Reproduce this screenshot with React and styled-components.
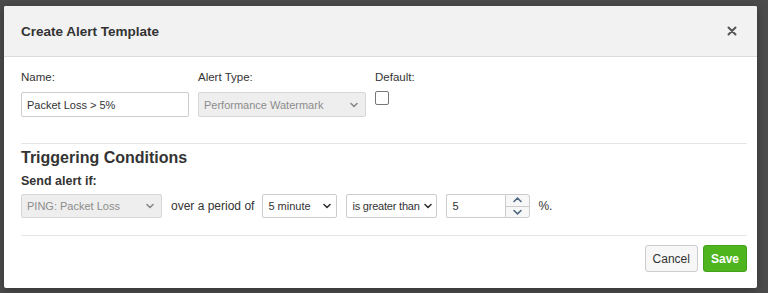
import React from 'react';
import styled, { createGlobalStyle } from 'styled-components';

const Global = createGlobalStyle`
  html, body { margin: 0; padding: 0; }
  body {
    background: #4b4b4b;
    font-family: "Liberation Sans", Arial, sans-serif;
    color: #333;
  }
`

const Backdrop = styled.div`
  padding: 6px 11px 5px 4px;
  height: 293px;
  box-sizing: border-box;
`
const Modal = styled.div`
  background: #fff;
  border-radius: 2px;
  height: 282px;
  display: flex;
  flex-direction: column;
  box-shadow: 0 2px 8px rgba(0,0,0,0.3);
`
const Header = styled.div`
  height: 50px;
  background: #f2f2f2;
  border-bottom: 1px solid #dcdcdc;
  border-radius: 2px 2px 0 0;
  display: flex;
  align-items: center;
  justify-content: space-between;
  padding: 0 20px 0 17px;
`
const Title = styled.h4`
  margin: 0;
  font-size: 13.5px;
  font-weight: bold;
  color: #333;
`
const Close = styled.button`
  border: none;
  background: none;
  padding: 0;
  color: #555;
  display: flex;
  cursor: pointer;
`
const Body = styled.div`
  padding: 13px 10px 0 17px;
`
const Fields = styled.div`
  display: flex;
  gap: 9px;
`
const Field = styled.div`
  display: flex;
  flex-direction: column;
  width: ${p => p.width || 'auto'};
`
const Label = styled.label`
  font-size: 11.5px;
  line-height: 14px;
  margin-bottom: 8px;
  color: #333;
`
const TextInput = styled.input`
  box-sizing: border-box;
  width: 100%;
  height: 25px;
  border: 1px solid #ccc;
  border-radius: 2px;
  padding: 0 5px;
  font: 11px "Liberation Sans", Arial, sans-serif;
  color: #333;
  outline: none;
`
const SelectWrap = styled.div`
  position: relative;
  width: ${p => p.width};
  height: ${p => p.height || '24px'};
  margin-left: ${p => p.offset || '0'};
`
const Select = styled.select`
  appearance: none;
  box-sizing: border-box;
  width: 100%;
  height: 100%;
  border: 1px solid ${p => (p.disabled ? '#d6d6d6' : '#ccc')};
  border-radius: 2px;
  background: ${p => (p.disabled ? '#eeeeee' : '#fff')};
  color: ${p => (p.disabled ? '#8c8c8c' : '#333')};
  font: 11px "Liberation Sans", Arial, sans-serif;
  letter-spacing: ${p => p.tight ? '-0.2px' : '0'};
  padding: 0 14px 0 5px;
  opacity: 1;
`
const Chevron = styled.svg`
  position: absolute;
  right: ${p => p.right || '7px'};
  top: 50%;
  transform: translateY(-50%);
  pointer-events: none;
`
const Check = styled.span`
  display: block;
  width: 12px;
  height: 12px;
  border: 1px solid #767676;
  border-radius: 2px;
  background: #fff;
  margin-top: -1px;
`
const Hr = styled.div`
  height: 1px;
  background: #e5e5e5;
  margin: ${p => p.margin};
`
const SectionTitle = styled.h3`
  margin: 0;
  font-size: 16px;
  font-weight: bold;
  line-height: 18px;
  color: #333;
`
const SubTitle = styled.div`
  font-size: 12.5px;
  font-weight: bold;
  line-height: 14px;
  margin: 7px 0 6px;
`
const CondRow = styled.div`
  display: flex;
  align-items: center;
  height: 24px;
`
const Text = styled.span`
  font-size: 12px;
  color: #333;
  margin: ${p => p.margin};
`
const NumberBox = styled.div`
  display: flex;
  height: 24px;
  margin-left: 9px;
`
const NumberInput = styled.input`
  box-sizing: border-box;
  width: 59px;
  height: 24px;
  border: 1px solid #ccc;
  border-right: none;
  border-radius: 2px 0 0 2px;
  padding: 0 5px;
  font: 11px "Liberation Sans", Arial, sans-serif;
  color: #333;
  outline: none;
`
const Spinner = styled.div`
  width: 25px;
  display: flex;
  flex-direction: column;
  border: 1px solid #ccc;
  border-radius: 0 3px 3px 0;
  box-sizing: border-box;
  background: #f7f7f7;
`
const SpinBtn = styled.div`
  flex: 1;
  display: flex;
  align-items: center;
  justify-content: center;
  border-top: ${p => (p.bottom ? '1px solid #ccc' : 'none')};
`
const Footer = styled.div`
  display: flex;
  justify-content: flex-end;
  gap: 5px;
  padding: 9px 10px 0 0;
`
const Button = styled.button`
  height: 27px;
  padding: 0 ${p => (p.primary ? '7px' : '7px')};
  border-radius: 3px;
  font: 12px "Liberation Sans", Arial, sans-serif;
  font-weight: ${p => (p.primary ? 'bold' : 'normal')};
  color: ${p => (p.primary ? '#fff' : '#333')};
  background: ${p => (p.primary ? '#4fb51f' : '#f7f7f7')};
  border: 1px solid ${p => (p.primary ? '#45a019' : '#ccc')};
  cursor: pointer;
`

const Down = ({ color = '#555', right }) => (
  <Chevron width="8" height="6" viewBox="0 0 8 6" right={right}>
    <path d="M1 1.5 L4 4.5 L7 1.5" fill="none" stroke={color} strokeWidth="1.6" strokeLinecap="round" strokeLinejoin="round" />
  </Chevron>
)

const App = () => {
  return (
    <>
      <Global />
      <Backdrop>
        <Modal>
          <Header>
            <Title>Create Alert Template</Title>
            <Close aria-label="close">
              <svg width="10" height="10" viewBox="0 0 10 10">
                <path d="M1.5 1.5 L8.5 8.5 M8.5 1.5 L1.5 8.5" stroke="#555" strokeWidth="2" strokeLinecap="round" />
              </svg>
            </Close>
          </Header>
          <Body>
            <Fields>
              <Field width="168px">
                <Label>Name:</Label>
                <TextInput defaultValue="Packet Loss > 5%" />
              </Field>
              <Field width="168px">
                <Label>Alert Type:</Label>
                <SelectWrap width="168px" height="25px">
                  <Select disabled>
                    <option>Performance Watermark</option>
                  </Select>
                  <Down color="#888" right="8px" />
                </SelectWrap>
              </Field>
              <Field>
                <Label>Default:</Label>
                <Check />
              </Field>
            </Fields>
            <Hr margin="26px 0 5px 0" />
            <SectionTitle>Triggering Conditions</SectionTitle>
            <SubTitle>Send alert if:</SubTitle>
            <CondRow>
              <SelectWrap width="141px">
                <Select disabled>
                  <option>PING: Packet Loss</option>
                </Select>
                <Down color="#888" right="8px" />
              </SelectWrap>
              <Text margin="0 8px 0 9px">over a period of</Text>
              <SelectWrap width="75px">
                <Select>
                  <option>5 minute</option>
                </Select>
                <Down color="#333" right="6px" />
              </SelectWrap>
              <SelectWrap width="91px" offset="9px">
                <Select tight>
                  <option>is greater than</option>
                </Select>
                <Down color="#333" right="5px" />
              </SelectWrap>
              <NumberBox>
                <NumberInput defaultValue="5" />
                <Spinner>
                  <SpinBtn>
                    <svg width="9" height="6" viewBox="0 0 9 6">
                      <path d="M1 4.5 L4.5 1.2 L8 4.5" fill="none" stroke="#4d6680" strokeWidth="1.6" strokeLinecap="round" />
                    </svg>
                  </SpinBtn>
                  <SpinBtn bottom>
                    <svg width="9" height="6" viewBox="0 0 9 6">
                      <path d="M1 1.5 L4.5 4.8 L8 1.5" fill="none" stroke="#4d6680" strokeWidth="1.6" strokeLinecap="round" />
                    </svg>
                  </SpinBtn>
                </Spinner>
              </NumberBox>
              <Text margin="0 0 0 8px">%.</Text>
            </CondRow>
            <Hr margin="17px 0 0 0" />
          </Body>
          <Footer>
            <Button>Cancel</Button>
            <Button primary>Save</Button>
          </Footer>
        </Modal>
      </Backdrop>
    </>
  );
};

export default App;
